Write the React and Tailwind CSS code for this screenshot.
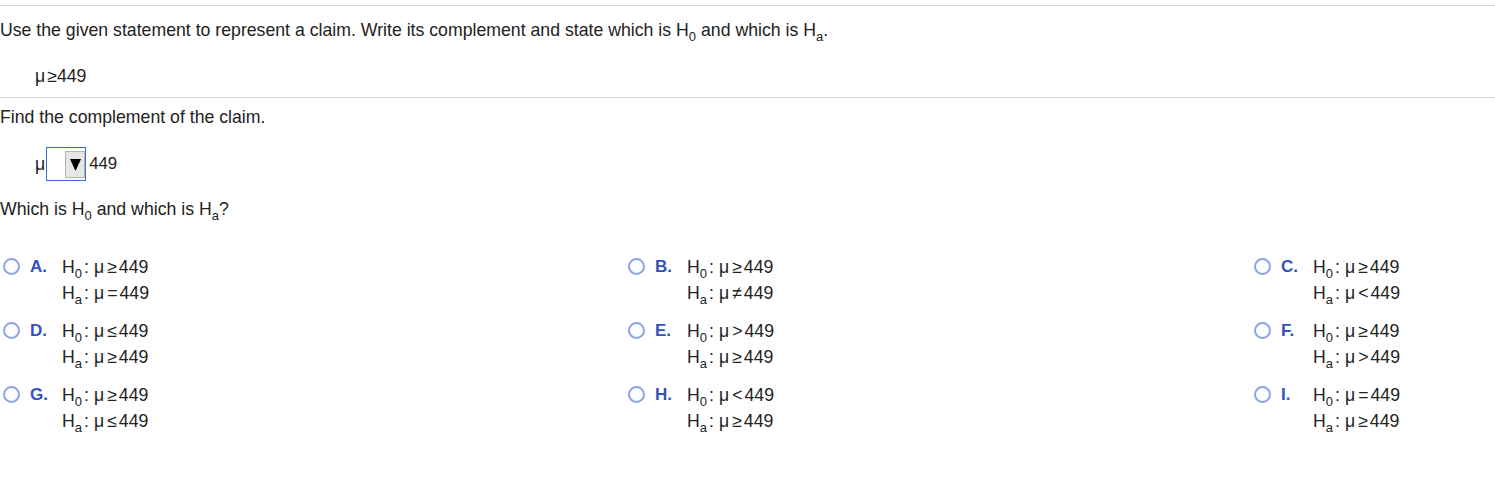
import React from "react";

const options = [
  { key: "A", h0: "≥", ha: "=" },
  { key: "B", h0: "≥", ha: "≠" },
  { key: "C", h0: "≥", ha: "<" },
  { key: "D", h0: "≤", ha: "≥" },
  { key: "E", h0: ">", ha: "≥" },
  { key: "F", h0: "≥", ha: ">" },
  { key: "G", h0: "≥", ha: "≤" },
  { key: "H", h0: "<", ha: "≥" },
  { key: "I", h0: "=", ha: "≥" },
];

function Sub({ children }) {
  return <span className="text-[13px] relative top-[5px]">{children}</span>;
}

function Hyp({ sub, op }) {
  return (
    <div className="flex items-baseline h-[26px] leading-[26px] whitespace-nowrap">
      <span>H</span>
      <Sub>{sub}</Sub>
      <span className="ml-[2px]">:</span>
      <span className="ml-[5px]">μ</span>
      <span className="ml-[3px]">{op}</span>
      <span className="ml-[2px]">449</span>
    </div>
  );
}

function Option({ opt }) {
  return (
    <div className="flex items-start">
      <div className="w-[17px] h-[17px] rounded-full border-2 border-[#8ea3e2] mt-[4px] ml-[3px]" />
      <div className="w-[32px] ml-[10px] font-bold text-[17px] text-[#3452c0] h-[26px] leading-[26px]">
        {opt.key}.
      </div>
      <div>
        <Hyp sub="0" op={opt.h0} />
        <Hyp sub="a" op={opt.ha} />
      </div>
    </div>
  );
}

export default function App() {
  return (
    <div
      className="w-[1495px] h-[478px] bg-white text-[#222] text-[17.7px] pt-[5px]"
      style={{ fontFamily: '"Liberation Sans", Arial, sans-serif' }}
    >
      <div className="border-t border-[#d3d3db] pt-[14px]">
        <p className="leading-5 flex items-baseline whitespace-pre">
          <span>Use the given statement to represent a claim. Write its complement and state which is H</span>
          <Sub>0</Sub>
          <span> and which is H</span>
          <Sub>a</Sub>
          <span>.</span>
        </p>
        <div className="leading-5 mt-[24px] pl-[35px] pb-[11px] flex items-baseline">
          <span>μ</span>
          <span className="ml-[2px]">≥</span>
          <span>449</span>
        </div>
      </div>

      <div className="border-t border-[#d3d3db] pt-[9px]">
        <p className="leading-5">Find the complement of the claim.</p>
        <div className="mt-[20px] pl-[35px] flex items-center h-[34px]">
          <span>μ</span>
          <div className="ml-[1px] w-[40px] h-[34px] border border-[#3d6cd4] flex justify-end pt-[3px]">
            <div className="w-[20px] h-[27px] bg-[#e6e6e6] border border-[#b4b4b4] flex items-center justify-center">
              <svg width="11" height="12" viewBox="0 0 11 12">
                <polygon points="0,0 11,0 5.5,12" fill="#000" />
              </svg>
            </div>
          </div>
          <span className="ml-[3px] text-[16.8px]">449</span>
        </div>
        <p className="leading-5 mt-[18px] flex items-baseline whitespace-pre">
          <span>Which is H</span>
          <Sub>0</Sub>
          <span> and which is H</span>
          <Sub>a</Sub>
          <span>?</span>
        </p>
      </div>

      <div className="grid grid-cols-[625px_626px_1fr] gap-y-[12px] mt-[33px]">
        {options.map((opt) => (
          <Option key={opt.key} opt={opt} />
        ))}
      </div>
    </div>
  );
}
